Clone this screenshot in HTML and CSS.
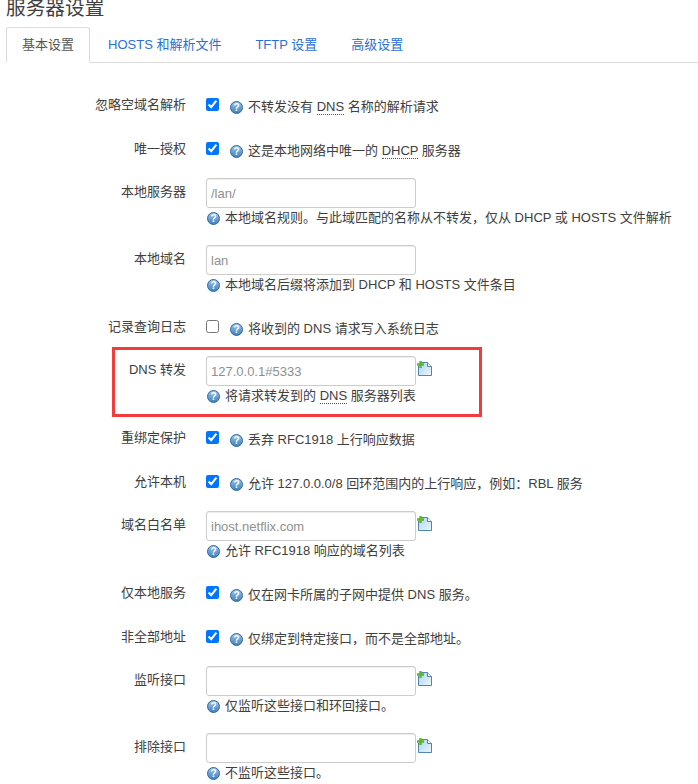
FILE: index.html
```html
<!DOCTYPE html>
<html lang="zh-CN">
<head>
    <meta charset="UTF-8">
    <title>服务器设置</title>
    <link rel="stylesheet" href="styles.css">
</head>
<body>
    <h2 class="title">服务器设置</h2>

    <ul class="tabs">
        <li class="tab active"><a href="#">基本设置</a></li>
        <li class="tab"><a href="#">HOSTS 和解析文件</a></li>
        <li class="tab"><a href="#">TFTP 设置</a></li>
        <li class="tab"><a href="#">高级设置</a></li>
    </ul>

    <div class="section">
        <div class="row check">
            <label class="name">忽略空域名解析</label>
            <div class="field">
                <input type="checkbox" checked>
                <svg class="help"><use href="#help"/></svg>
                <span>不转发没有 <abbr>DNS</abbr> 名称的解析请求</span>
            </div>
        </div>
        <div class="row check">
            <label class="name">唯一授权</label>
            <div class="field">
                <input type="checkbox" checked>
                <svg class="help"><use href="#help"/></svg>
                <span>这是本地网络中唯一的 <abbr>DHCP</abbr> 服务器</span>
            </div>
        </div>
        <div class="row text">
            <label class="name">本地服务器</label>
            <div class="stack">
                <div class="line"><input class="input" type="text" placeholder="/lan/"></div>
                <div class="desc">
                    <svg class="help"><use href="#help"/></svg>
                    <span>本地域名规则。与此域匹配的名称从不转发，仅从 DHCP 或 HOSTS 文件解析</span>
                </div>
            </div>
        </div>
        <div class="row text">
            <label class="name">本地域名</label>
            <div class="stack">
                <div class="line"><input class="input" type="text" placeholder="lan"></div>
                <div class="desc">
                    <svg class="help"><use href="#help"/></svg>
                    <span>本地域名后缀将添加到 DHCP 和 HOSTS 文件条目</span>
                </div>
            </div>
        </div>
        <div class="row check">
            <label class="name">记录查询日志</label>
            <div class="field">
                <input type="checkbox">
                <svg class="help"><use href="#help"/></svg>
                <span>将收到的 DNS 请求写入系统日志</span>
            </div>
        </div>
        <div class="row text marked">
            <label class="name">DNS 转发</label>
            <div class="stack">
                <div class="line">
                    <input class="input" type="text" placeholder="127.0.0.1#5333">
                    <svg class="add"><use href="#add"/></svg>
                </div>
                <div class="desc">
                    <svg class="help"><use href="#help"/></svg>
                    <span>将请求转发到的 <abbr>DNS</abbr> 服务器列表</span>
                </div>
            </div>
            <div class="redbox"></div>
        </div>
        <div class="row check">
            <label class="name">重绑定保护</label>
            <div class="field">
                <input type="checkbox" checked>
                <svg class="help"><use href="#help"/></svg>
                <span>丢弃 RFC1918 上行响应数据</span>
            </div>
        </div>
        <div class="row check">
            <label class="name">允许本机</label>
            <div class="field">
                <input type="checkbox" checked>
                <svg class="help"><use href="#help"/></svg>
                <span>允许 127.0.0.0/8 回环范围内的上行响应，例如：RBL 服务</span>
            </div>
        </div>
        <div class="row text">
            <label class="name">域名白名单</label>
            <div class="stack">
                <div class="line">
                    <input class="input" type="text" placeholder="ihost.netflix.com">
                    <svg class="add"><use href="#add"/></svg>
                </div>
                <div class="desc">
                    <svg class="help"><use href="#help"/></svg>
                    <span>允许 RFC1918 响应的域名列表</span>
                </div>
            </div>
        </div>
        <div class="row check">
            <label class="name">仅本地服务</label>
            <div class="field">
                <input type="checkbox" checked>
                <svg class="help"><use href="#help"/></svg>
                <span>仅在网卡所属的子网中提供 DNS 服务。</span>
            </div>
        </div>
        <div class="row check">
            <label class="name">非全部地址</label>
            <div class="field">
                <input type="checkbox" checked>
                <svg class="help"><use href="#help"/></svg>
                <span>仅绑定到特定接口，而不是全部地址。</span>
            </div>
        </div>
        <div class="row text">
            <label class="name">监听接口</label>
            <div class="stack">
                <div class="line">
                    <input class="input" type="text">
                    <svg class="add"><use href="#add"/></svg>
                </div>
                <div class="desc">
                    <svg class="help"><use href="#help"/></svg>
                    <span>仅监听这些接口和环回接口。</span>
                </div>
            </div>
        </div>
        <div class="row text">
            <label class="name">排除接口</label>
            <div class="stack">
                <div class="line">
                    <input class="input" type="text">
                    <svg class="add"><use href="#add"/></svg>
                </div>
                <div class="desc">
                    <svg class="help"><use href="#help"/></svg>
                    <span>不监听这些接口。</span>
                </div>
            </div>
        </div>
    </div>

    <svg class="sprites" width="0" height="0">
        <symbol id="help" viewBox="0 0 13 13">
            <defs>
                <linearGradient id="helpfill" x1="0" y1="0" x2="0" y2="1">
                    <stop offset="0" stop-color="#9cc4e8"/>
                    <stop offset="1" stop-color="#3f80bd"/>
                </linearGradient>
            </defs>
            <circle cx="6.5" cy="6.5" r="6" fill="url(#helpfill)" stroke="#2f6a9e" stroke-width="1"/>
            <text x="6.5" y="10" text-anchor="middle" font-family="Liberation Sans, sans-serif" font-size="10" font-weight="700" fill="#fff">?</text>
        </symbol>
        <symbol id="add" viewBox="0 0 15 15">
            <defs>
                <linearGradient id="addfill" x1="0" y1="0" x2="1" y2="1">
                    <stop offset="0" stop-color="#a9d4f0"/>
                    <stop offset="1" stop-color="#eef7fc"/>
                </linearGradient>
            </defs>
            <path d="M3.5 1.5H10.5L14.5 5.5V14.5H1.5V5" fill="url(#addfill)" stroke="#4f86ad" stroke-width="1"/>
            <path d="M10.5 1.5V5.5H14.5" fill="#fff" stroke="#4f86ad" stroke-width="1"/>
            <path d="M2.3 0H4.7V2.3H7V4.7H4.7V7H2.3V4.7H0V2.3H2.3Z" fill="#5fb52c"/>
        </symbol>
    </svg>
</body>
</html>
```

FILE: styles.css
```css
html, body {
    margin: 0;
    padding: 0;
    height: 784px;
    overflow: hidden;
    background: #fff;
    color: #404040;
    font-family: "Liberation Sans", "Noto Sans CJK SC", sans-serif;
    font-size: 13px;
}

.sprites {
    position: absolute;
    top: 300px;
    left: 650px;
}

.title {
    margin: -7px 0 0 6px;
    height: 34px;
    line-height: 30px;
    font-size: 19.7px;
    font-weight: 400;
}

.tabs {
    display: flex;
    margin: 0 0 0 6px;
    padding: 0;
    height: 36px;
    list-style: none;
    border-bottom: 1px solid #ddd;
    box-sizing: border-box;
}

.tab {
    height: 36px;
    box-sizing: border-box;
    padding: 0 16px;
    line-height: 34px;
    border: 1px solid transparent;
}

.tab a {
    color: #2a6fd6;
    text-decoration: none;
}

.tab.active {
    margin-right: 1px;
    padding: 0 15px;
    background: #fff;
    border-color: #ddd #ddd #fff;
    border-radius: 3px 3px 0 0;
}

.tab.active a {
    color: #555;
}

.section {
    padding-top: 20px;
}

.row {
    display: flex;
    position: relative;
}

.row.check {
    height: 44px;
    align-items: center;
}

.row.text {
    height: 67px;
    padding-top: 7px;
    box-sizing: border-box;
}

.name {
    flex: 0 0 186px;
    text-align: right;
    line-height: 18px;
}

.row.text .name {
    line-height: 28px;
}

.field {
    display: flex;
    align-items: center;
    margin-left: 20px;
}

.field input {
    margin: 0 11px 0 0;
    width: 13px;
    height: 13px;
    position: relative;
    top: -1px;
}

.field .help {
    margin-right: 5px;
    position: relative;
    top: 2px;
}

.stack {
    margin-left: 20px;
}

.line {
    display: flex;
    height: 30px;
}

.input {
    width: 210px;
    height: 30px;
    padding: 0 4px;
    box-sizing: border-box;
    border: 1px solid #ccc;
    border-radius: 3px;
    font-family: inherit;
    font-size: 13px;
    color: #555;
    box-shadow: inset 0 1px 1px rgba(0, 0, 0, 0.075);
}

.input::placeholder {
    color: #8f8f8f;
}

.add {
    width: 15px;
    height: 15px;
    margin: 5px 0 0 1px;
}

.help {
    flex: none;
    width: 13px;
    height: 13px;
}

.desc {
    display: flex;
    align-items: center;
    height: 16px;
    white-space: nowrap;
}

.desc .help {
    margin: 0 5px 0 1px;
    position: relative;
    top: 2px;
}

abbr {
    text-decoration: none;
    border-bottom: 1px dotted #555;
}

.redbox {
    position: absolute;
    left: 112px;
    top: -2px;
    width: 370px;
    height: 70px;
    box-sizing: border-box;
    border: 3px solid #f33b3b;
}
```
